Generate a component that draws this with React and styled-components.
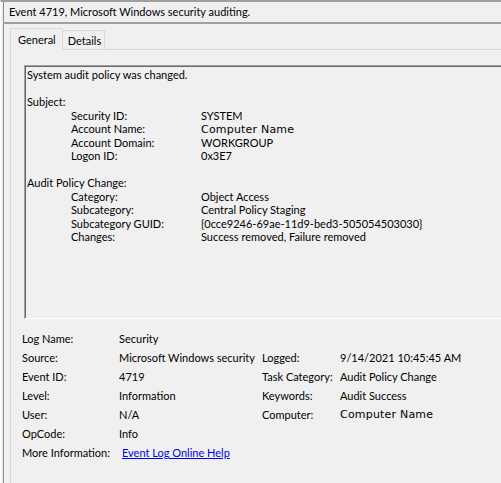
import React from "react";
import styled, { createGlobalStyle } from "styled-components";

const GlobalStyle = createGlobalStyle`
  html, body {
    margin: 0;
    padding: 0;
    background: #f0f0f0;
    overflow: hidden;
  }
  body {
    font-family: Lato, "Noto Sans", sans-serif;
    font-size: 11px;
    color: #000;
  }
`;

const Window = styled.div`
  width: 501px;
  height: 483px;
  box-sizing: border-box;
  border-top: 2px solid #a0a0a0;
  border-left: 1px solid #ffffff;
  box-shadow: inset 2px 0 0 #f0f0f0, inset 3px 0 0 #8c8c8c;
  background: #f0f0f0;
  overflow: hidden;
`;

const TitleBar = styled.div`
  height: 20px;
  line-height: 20px;
  font-size: 11px;
  padding-left: 6px;
  border-bottom: 2px solid #a0a0a0;
  margin-left: 2px;
  white-space: nowrap;
`;

const TabsArea = styled.div`
  padding: 4px 0 0 9px;
`;

const TabList = styled.div`
  display: flex;
  align-items: flex-end;
  height: 21px;
`;

const Tab = styled.div`
  box-sizing: border-box;
  height: ${(p) => (p.$active ? "22px" : "19px")};
  padding: ${(p) => (p.$active ? "0 6px 0 7px" : "0 3px 0 5px")};
  line-height: ${(p) => (p.$active ? "21px" : "19px")};
  border: 1px solid #d9d9d9;
  border-bottom: none;
  border-left: ${(p) => (p.$active ? "1px solid #d9d9d9" : "none")};
  background: #f0f0f0;
  margin-bottom: ${(p) => (p.$active ? "-1px" : "0")};
  position: relative;
  z-index: ${(p) => (p.$active ? 1 : 0)};
`;

const TabPanel = styled.div`
  border-top: 1px solid #d9d9d9;
  border-left: 1px solid #d9d9d9;
  height: 440px;
  padding: 15px 0 0 13px;
  box-sizing: border-box;
`;

const DescBox = styled.div`
  width: 520px;
  height: 254px;
  box-sizing: border-box;
  border-top: 1px solid #a0a0a0;
  border-left: 1px solid #a0a0a0;
  border-bottom: 1px solid #ffffff;
  box-shadow: inset 1px 1px 0 #696969;
  padding: 2px 0 0 2px;
`;

const Line = styled.div`
  height: 13.5px;
  line-height: 13.5px;
  white-space: nowrap;
`;

const Field = styled.div`
  display: grid;
  grid-template-columns: 130px 1fr;
  height: 13.5px;
  line-height: 13.5px;
  padding-left: 44px;
  white-space: nowrap;
`;

const AltValue = styled.span`
  font-family: "DejaVu Sans", sans-serif;
  font-size: 11px;
  letter-spacing: 0.2px;
`;

const InfoGrid = styled.div`
  display: grid;
  grid-template-columns: 97px 143px 78px 1fr;
  grid-auto-rows: 19px;
  align-items: center;
  margin: 10px 0 0 -2px;
  white-space: nowrap;
`;

const Link = styled.a`
  color: #0000ee;
  text-decoration: underline;
  margin-left: 3px;
  cursor: pointer;
`;

const subject = [
  ["Security ID:", "SYSTEM"],
  ["Account Name:", <AltValue>Computer Name</AltValue>],
  ["Account Domain:", "WORKGROUP"],
  ["Logon ID:", "0x3E7"],
];

const policy = [
  ["Category:", "Object Access"],
  ["Subcategory:", "Central Policy Staging"],
  ["Subcategory GUID:", "{0cce9246-69ae-11d9-bed3-505054503030}"],
  ["Changes:", "Success removed, Failure removed"],
];

export default function App() {
  return (
    <Window>
      <GlobalStyle />
      <TitleBar>Event 4719, Microsoft Windows security auditing.</TitleBar>
      <TabsArea>
        <TabList>
          <Tab $active>General</Tab>
          <Tab>Details</Tab>
        </TabList>
        <TabPanel>
          <DescBox>
            <Line>System audit policy was changed.</Line>
            <Line />
            <Line>Subject:</Line>
            {subject.map(([k, v]) => (
              <Field key={k}>
                <span>{k}</span>
                <span>{v}</span>
              </Field>
            ))}
            <Line />
            <Line>Audit Policy Change:</Line>
            {policy.map(([k, v]) => (
              <Field key={k}>
                <span>{k}</span>
                <span>{v}</span>
              </Field>
            ))}
          </DescBox>
          <InfoGrid>
            <span>Log Name:</span>
            <span>Security</span>
            <span />
            <span />
            <span>Source:</span>
            <span>Microsoft Windows security</span>
            <span>Logged:</span>
            <span>9/14/2021 10:45:45 AM</span>
            <span>Event ID:</span>
            <span>4719</span>
            <span>Task Category:</span>
            <span>Audit Policy Change</span>
            <span>Level:</span>
            <span>Information</span>
            <span>Keywords:</span>
            <span>Audit Success</span>
            <span>User:</span>
            <span>N/A</span>
            <span>Computer:</span>
            <AltValue>Computer Name</AltValue>
            <span>OpCode:</span>
            <span>Info</span>
            <span />
            <span />
            <span>More Information:</span>
            <Link>Event Log Online Help</Link>
          </InfoGrid>
        </TabPanel>
      </TabsArea>
    </Window>
  );
}
